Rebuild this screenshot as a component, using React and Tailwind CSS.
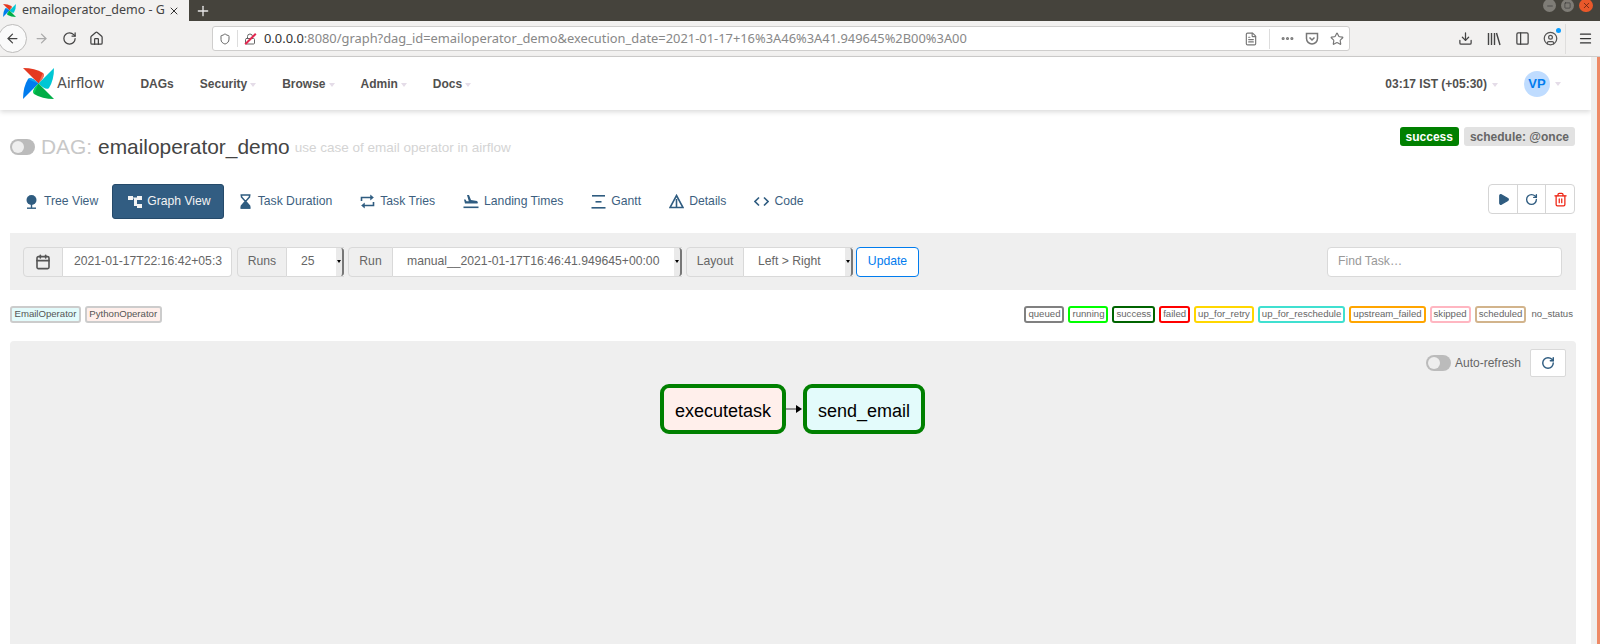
import React from 'react';
import { ArrowLeft, ArrowRight, RotateCw, Home, Shield, Lock, FileText, Star, Download, PanelLeft, CircleUser, Menu, X, Plus, Minus, Square, Calendar, Play, Trash2, Ellipsis } from 'lucide-react';

function Pinwheel({ size = 30 }) {
  return (
    <svg width={size} height={size} viewBox="0 0 31 31">
      <path d="M0 0 Q12 0 20 5 Q23 8 15.5 15.5 Z" fill="#e43921" />
      <path d="M20 5 Q23 8 15.5 15.5 L19 7 Z" fill="#f37056" />
      <path d="M31 0 Q31 12 26 20 Q23 23 15.5 15.5 Z" fill="#00c7d4" />
      <path d="M0 31 Q0 19 5 11 Q8 8 15.5 15.5 Z" fill="#017cee" />
      <path d="M5 11 Q8 8 15.5 15.5 L7 12 Z" fill="#11a8f0" />
      <path d="M31 31 Q19 31 11 26 Q8 23 15.5 15.5 Z" fill="#00ad46" />
      <path d="M11 26 Q8 23 15.5 15.5 L12 24 Z" fill="#04d659" />
    </svg>
  );
}

function Browser() {
  return (
    <div className="font-['Noto_Sans',sans-serif]">
      <div className="h-[21px] flex bg-[#45433c]">
        <div className="w-[189px] bg-[#f2f1f0] flex items-center pl-[3px] text-[12.5px] text-[#444]">
          <Pinwheel size={13} />
          <span className="ml-[6px] whitespace-nowrap w-[146px]">emailoperator_demo - G</span>
          <X size={12} className="shrink-0 text-[#333]" />
        </div>
        <div className="w-[28px] flex items-center justify-center">
          <Plus size={16} strokeWidth={2} className="text-[#e8e8e8]" />
        </div>
        <div className="flex-1 flex justify-end items-start gap-[5px] pr-[7px] -mt-[1px]">
          <div className="w-[13px] h-[13px] rounded-full bg-[#7e7c76] flex items-center justify-center"><Minus size={8} className="text-[#333]" /></div>
          <div className="w-[13px] h-[13px] rounded-full bg-[#7e7c76] flex items-center justify-center"><Square size={7} className="text-[#333]" /></div>
          <div className="w-[14px] h-[13px] rounded-full bg-[#e9582a] flex items-center justify-center"><X size={9} className="text-[#5a2010]" /></div>
        </div>
      </div>
      <div className="h-[36px] bg-[#f2f1f0] border-b border-[#cfcecd] flex items-center">
        <div className="w-[29px] h-[29px] -ml-[2px] rounded-full border border-[#bdbcbb] bg-[#fafafa] flex items-center justify-center">
          <ArrowLeft size={15} className="text-[#444]" />
        </div>
        <ArrowRight size={15} className="ml-[7px] text-[#aaa]" />
        <RotateCw size={15} className="ml-[13px] text-[#444]" />
        <Home size={15} className="ml-[12px] text-[#444]" />
        <div className="ml-[108px] w-[1138px] h-[25px] bg-white border border-[#cfcecd] rounded-[3px] flex items-center text-[12.88px]">
          <Shield size={12} className="ml-[6px] text-[#666]" />
          <div className="ml-[6px] w-px h-[17px] bg-[#ddd]" />
          <div className="ml-[6px] relative">
            <Lock size={12} className="text-[#666]" />
            <div className="absolute left-[-1px] top-[5px] w-[15px] h-[2px] bg-[#e22850] -rotate-45" />
          </div>
          <span className="ml-[8px] text-[#333] whitespace-nowrap">0.0.0.0<span className="text-[#888]">:8080/graph?dag_id=emailoperator_demo&execution_date=2021-01-17+16%3A46%3A41.949645%2B00%3A00</span></span>
          <div className="ml-auto flex items-center">
            <FileText size={14} className="text-[#777]" />
            <div className="ml-[11px] w-px h-[20px] bg-[#ddd]" />
            <Ellipsis size={15} strokeWidth={3} className="ml-[10px] text-[#777]" />
            <svg width="14" height="14" viewBox="0 0 14 14" fill="none" stroke="#777" strokeWidth="1.5" className="ml-[10px]">
              <path d="M1.5 1.5 H12.5 V6.5 A5.5 5.5 0 0 1 1.5 6.5 Z" />
              <path d="M4.5 5.5 L7 8 L9.5 5.5" />
            </svg>
            <Star size={14} className="ml-[11px] mr-[5px] text-[#777]" />
          </div>
        </div>
        <Download size={15} className="ml-[108px] text-[#444]" />
        <svg width="14" height="14" viewBox="0 0 14 14" stroke="#444" strokeWidth="1.4" className="ml-[14px]">
          <path d="M1.5 1 V13 M4.5 1 V13 M7.5 1 V13 M9.5 1 L13 13" />
        </svg>
        <PanelLeft size={15} className="ml-[14px] text-[#444]" />
        <div className="ml-[13px] relative">
          <CircleUser size={15} className="text-[#555]" />
          <div className="absolute right-[-3px] top-[-3px] w-[5px] h-[5px] rounded-full bg-[#0a9dff]" />
        </div>
        <div className="ml-[7px] w-px h-[30px] bg-[#dfdedd]" />
        <Menu size={15} className="ml-[12px] text-[#333]" />
      </div>
    </div>
  );
}

function Caret({ className = '' }) {
  return <span className={`w-0 h-0 border-x-[3px] border-x-transparent border-t-[4px] border-t-[#e4dce8] ${className}`} />;
}

function NavItem({ label, caret = true }) {
  return (
    <span className="flex items-center gap-[3px] text-[12px] font-bold text-[#51504f]">
      {label}
      {caret && <Caret className="mt-[2px]" />}
    </span>
  );
}

function TabLink({ icon, label, active }) {
  return (
    <div className={`h-[35px] flex items-center gap-[5px] rounded-[3px] text-[12.2px] ${active ? 'bg-[#325d82] border border-[#254a6a] text-[#f3f3f3] pl-[15px] pr-[12px]' : 'text-[#3d5f7f] px-[14px]'}`}>
      {icon}
      {label}
    </div>
  );
}

function Addon({ children, className = '' }) {
  return <div className={`h-[30px] bg-[#efefef] border border-[#d9d9d9] flex items-center justify-center text-[#666] ${className}`}>{children}</div>;
}

function SelectBox({ value, className = '' }) {
  return (
    <div className={`h-[30px] bg-white border-y border-[#d9d9d9] flex items-center relative whitespace-nowrap text-[#666] pl-[14px] ${className}`}>
      {value}
      <div className="absolute right-0 top-0 bottom-0 w-[8px] bg-[#eaeaea] border-r-2 border-[#777] rounded-r-[3px] flex items-center justify-center">
        <span className="w-0 h-0 border-x-[2.5px] border-x-transparent border-t-[3px] border-t-black" />
      </div>
    </div>
  );
}

function Toggle() {
  return (
    <div className="w-[25px] h-[16px] rounded-full bg-[#bbb] flex items-center pl-[2px]">
      <div className="w-[12px] h-[12px] rounded-full bg-[#eee]" />
    </div>
  );
}

const states = [
  ['queued', 'border-[#808080]'],
  ['running', 'border-[#00ff00]'],
  ['success', 'border-[#006400]'],
  ['failed', 'border-[#ff0000]'],
  ['up_for_retry', 'border-[#ffd700]'],
  ['up_for_reschedule', 'border-[#40e0d0]'],
  ['upstream_failed', 'border-[#ffa500]'],
  ['skipped', 'border-[#ffb6c1]'],
  ['scheduled', 'border-[#d2b48c]'],
];

function GraphNode({ label, bg, className = '' }) {
  return (
    <div className={`h-[50px] pt-[4px] border-[4px] border-[#008000] rounded-[9px] flex items-center justify-center text-[18px] text-black ${bg} ${className}`}>
      {label}
    </div>
  );
}

const iconColor = '#2f5c80';

export default function App() {
  return (
    <div className="h-[644px] overflow-hidden bg-white font-['Liberation_Sans',sans-serif]">
      <Browser />
      <div className="flex h-[587px]">
        <div className="w-[1591px] shrink-0">
          <nav className="h-[53px] bg-white shadow-[0_2px_5px_rgba(0,0,0,0.15)] flex items-center pl-[23px] pr-[30px]">
            <Pinwheel size={31} />
            <span className="ml-[3px] font-['Roboto',sans-serif] text-[15.2px] text-[#51504f]">Airflow</span>
            <div className="ml-[36px] flex items-center gap-[26px]">
              <NavItem label="DAGs" caret={false} />
              <NavItem label="Security" />
              <NavItem label="Browse" />
              <NavItem label="Admin" />
              <NavItem label="Docs" />
            </div>
            <div className="ml-auto flex items-center">
              <span className="flex items-center gap-[5px] text-[12px] font-bold text-[#51504f]">
                03:17 IST (+05:30)
                <Caret className="mt-[2px]" />
              </span>
              <span className="ml-[26px] w-[26px] h-[26px] rounded-full bg-[#bfdcff] flex items-center justify-center text-[13px] font-bold text-[#017cee]">VP</span>
              <Caret className="ml-[5px]" />
            </div>
          </nav>

          <div className="pl-[10px] pr-[15px]">
            <div className="h-[74px] flex items-start">
              <div className="mt-[21px] flex items-center h-[32px]">
                <Toggle />
                <span className="ml-[6px] text-[20.9px] text-[#c8c8c8]">DAG:</span>
                <span className="ml-[6px] text-[20.9px] text-[#444]">emailoperator_demo</span>
                <span className="ml-[5px] mt-[3px] text-[13.5px] text-[#d4d4d4]">use case of email operator in airflow</span>
              </div>
              <div className="ml-auto mr-[1px] mt-[17px] flex gap-[5px]">
                <span className="h-[19px] px-[6px] rounded-[3px] bg-[#008000] text-white text-[12px] font-bold flex items-center">success</span>
                <span className="h-[19px] px-[6px] rounded-[3px] bg-[#e2e2e2] text-[#666] text-[12px] font-bold flex items-center">schedule: @once</span>
              </div>
            </div>

            <div className="h-[35px] flex items-start">
              <TabLink label="Tree View" icon={<svg width="15" height="16" viewBox="0 0 15 16"><circle cx="7.5" cy="6" r="5" fill={iconColor} /><rect x="6.8" y="10" width="1.4" height="4" fill={iconColor} /><rect x="3" y="13.5" width="9" height="1.4" fill={iconColor} /></svg>} />
              <TabLink active label="Graph View" icon={<svg width="14" height="14" viewBox="0 0 14 14" fill="#f3f3f3"><rect x="0" y="1" width="5" height="4" /><rect x="9" y="1" width="5" height="4" /><rect x="5" y="2.5" width="4" height="1" /><rect x="6" y="3" width="3" height="8" /><rect x="9" y="9" width="5" height="4" /></svg>} />
              <TabLink label="Task Duration" icon={<svg width="15" height="15" viewBox="0 0 15 15" fill="none" stroke={iconColor} strokeWidth="1.5"><path d="M2.5 1 H12.5 M2.5 14 H12.5 M3.5 1 V3 L11.5 12 V14 M11.5 1 V3 L3.5 12 V14" /><path d="M3.5 14 V12 L7.5 7.5 L11.5 12 V14 Z" fill={iconColor} /></svg>} />
              <TabLink label="Task Tries" icon={<svg width="15" height="15" viewBox="0 0 15 15" fill="none" stroke={iconColor} strokeWidth="1.6"><path d="M1.5 7 V3.5 H11" /><path d="M13.5 8 V11.5 H4" /><path d="M10.5 1 L13.5 3.5 L10.5 6 Z" fill={iconColor} strokeWidth="0.5" /><path d="M4.5 9 L1.5 11.5 L4.5 14 Z" fill={iconColor} strokeWidth="0.5" /></svg>} />
              <TabLink label="Landing Times" icon={<svg width="16" height="15" viewBox="0 0 16 15" fill={iconColor}><rect x="0.5" y="12.5" width="15" height="1.6" /><path d="M4 1 L6 1 L8 6 L14 7 Q15.5 8 14.5 9.5 L2 9.5 L1 5.5 L2.5 5.5 L3.5 7.2 L5.8 7.2 Z" /></svg>} />
              <TabLink label="Gantt" icon={<svg width="15" height="15" viewBox="0 0 15 15" fill={iconColor}><rect x="1" y="1" width="13" height="1.6" /><rect x="4.5" y="7" width="6" height="1.6" /><rect x="0.5" y="13" width="14" height="1.6" /></svg>} />
              <TabLink label="Details" icon={<svg width="15" height="15" viewBox="0 0 15 15" fill="none" stroke={iconColor} strokeWidth="1.6"><path d="M7.5 1.5 L14 13.5 H1 Z" /><path d="M7.5 5 V13" /></svg>} />
              <TabLink label="Code" icon={<svg width="15" height="15" viewBox="0 0 15 15" fill="none" stroke={iconColor} strokeWidth="1.6"><path d="M5 3.5 L1 7.5 L5 11.5" /><path d="M10 3.5 L14 7.5 L10 11.5" /></svg>} />
              <div className="ml-auto mr-[1px] h-[30px] flex border border-[#d5d5d5] rounded-[4px] bg-white">
                <div className="w-[29px] flex items-center justify-center border-r border-[#d5d5d5]"><Play size={13} fill={iconColor} className="text-[#2f5c80]" /></div>
                <div className="w-[28px] flex items-center justify-center border-r border-[#d5d5d5]"><RotateCw size={13} strokeWidth={2.5} className="text-[#2f5c80]" /></div>
                <div className="w-[28px] flex items-center justify-center"><Trash2 size={15} className="text-[#ee2211]" /></div>
              </div>
            </div>

            <div className="mt-[14px] h-[57px] bg-[#efefef] flex items-center pl-[13px] pr-[14px] text-[12.2px]">
              <Addon className="w-[40px] rounded-l-[4px]"><Calendar size={16} strokeWidth={2.4} className="text-[#555]" /></Addon>
              <div className="w-[169px] h-[30px] bg-white border-y border-r border-[#d9d9d9] rounded-r-[4px] flex items-center pl-[11px] text-[#666] whitespace-nowrap">2021-01-17T22:16:42+05:3</div>
              <Addon className="ml-[5px] w-[50px] rounded-l-[4px]">Runs</Addon>
              <SelectBox className="w-[57px]" value="25" />
              <Addon className="ml-[4px] w-[45px] rounded-l-[4px]">Run</Addon>
              <SelectBox className="w-[289px]" value="manual__2021-01-17T16:46:41.949645+00:00" />
              <Addon className="ml-[4px] w-[58px] rounded-l-[4px]">Layout</Addon>
              <SelectBox className="w-[109px]" value="Left > Right" />
              <div className="ml-[3px] w-[63px] h-[30px] bg-white border border-[#017cee] rounded-[4px] flex items-center justify-center text-[#017cee]">Update</div>
              <div className="ml-auto w-[235px] h-[30px] bg-white border border-[#d9d9d9] rounded-[4px] flex items-center pl-[10px] text-[#999]">Find Task…</div>
            </div>

            <div className="h-[51px] pb-[2px] flex items-center text-[9.6px] text-[#555]">
              <span className="h-[17px] px-[2.5px] flex items-center rounded-[3px] border-2 border-[#cccccc] bg-[#e3fbfb]">EmailOperator</span>
              <span className="ml-[4px] h-[17px] px-[2.5px] flex items-center rounded-[3px] border-2 border-[#cccccc] bg-[#ffefeb]">PythonOperator</span>
              <div className="ml-auto flex items-center gap-[4px]">
                {states.map(([name, border]) => (
                  <span key={name} className={`h-[17px] px-[2px] flex items-center rounded-[3px] border-2 bg-white text-[#666] ${border}`}>{name}</span>
                ))}
                <span className="ml-[1px] pr-[3px] text-[#666]">no_status</span>
              </div>
            </div>

            <div className="h-[303px] bg-[#efefef] rounded-t-[4px] pt-[8px]">
              <div className="flex items-center justify-end pr-[10px] h-[28px]">
                <Toggle />
                <span className="ml-[4px] text-[12px] text-[#666]">Auto-refresh</span>
                <div className="ml-[9px] w-[36px] h-[28px] bg-white border border-[#d9d9d9] rounded-[2px] flex items-center justify-center">
                  <RotateCw size={14} strokeWidth={2.5} className="text-[#2f5c80]" />
                </div>
              </div>
              <div className="flex items-center pl-[650px] mt-[7px]">
                <GraphNode label="executetask" bg="bg-[#ffefeb]" className="w-[126px]" />
                <svg width="17" height="12" viewBox="0 0 17 12" className="shrink-0">
                  <line x1="0" y1="6" x2="11" y2="6" stroke="#555" strokeWidth="1.2" />
                  <path d="M10 2 L16 6 L10 10 Z" fill="#000" />
                </svg>
                <GraphNode label="send_email" bg="bg-[#e3fbfb]" className="w-[122px]" />
              </div>
            </div>
          </div>
        </div>
        <div className="w-[6px] bg-[#f0efee]" />
        <div className="flex-1 bg-[#ee8a66]" />
      </div>
    </div>
  );
}
